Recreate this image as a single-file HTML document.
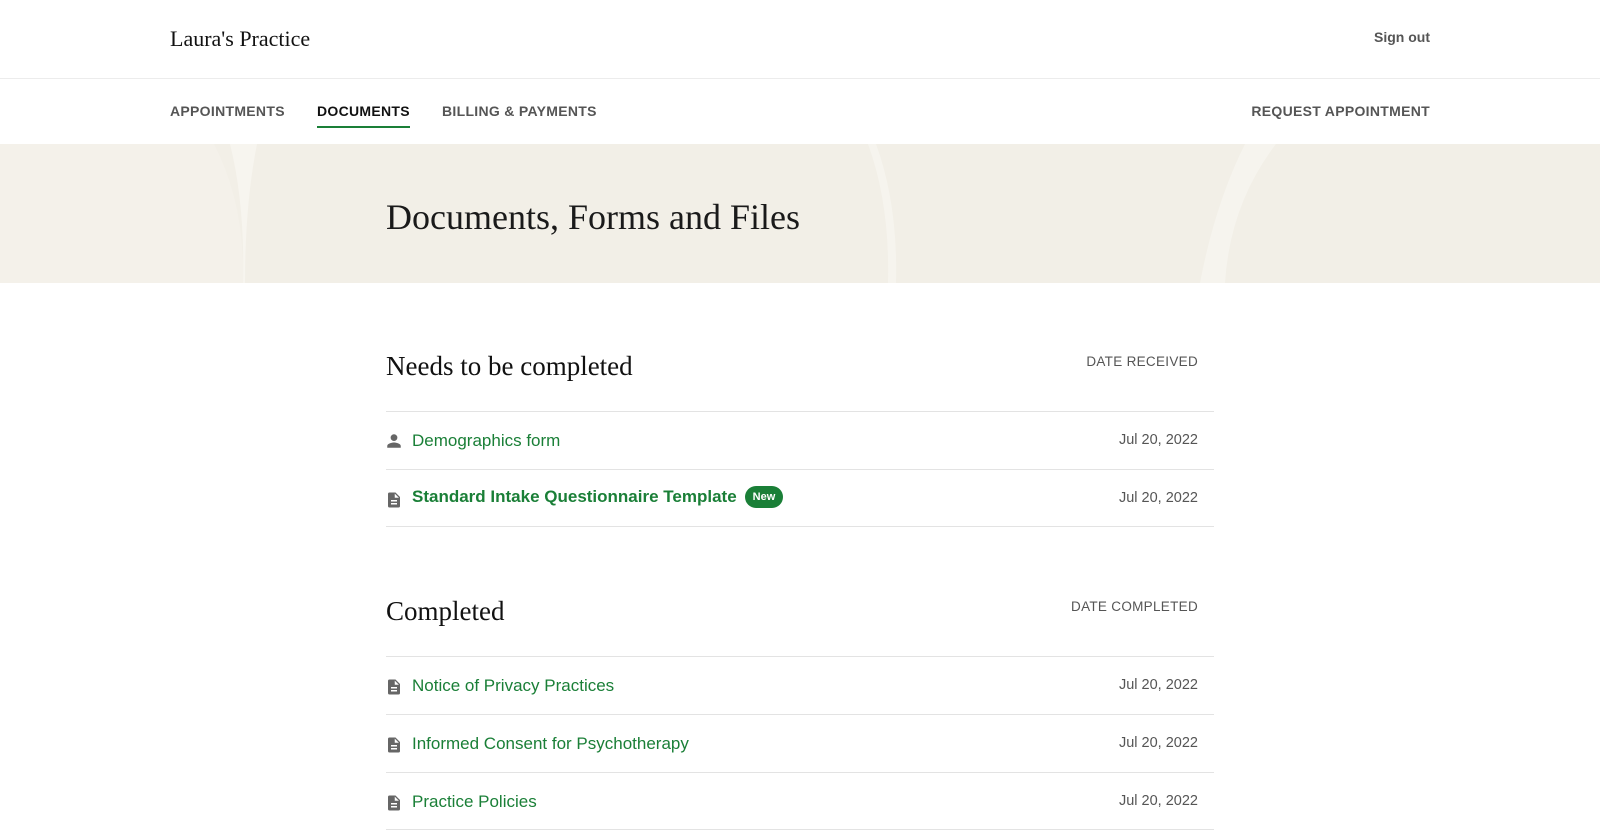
<!DOCTYPE html>
<html><head><meta charset="utf-8"><style>
*{margin:0;padding:0;box-sizing:border-box}
body{width:1600px;height:839px;overflow:hidden;background:#fff;font-family:"Liberation Sans",sans-serif;color:#222}
.top{height:79px;border-bottom:1px solid #ececec;position:relative}
.logo{position:absolute;left:170px;top:26px;font-family:"Liberation Serif",serif;font-size:22px;color:#111}
.signout{position:absolute;right:170px;top:29px;font-size:14px;font-weight:bold;color:#555}
.nav{height:65px;position:relative;font-size:14px;font-weight:bold;color:#555}
.nav span{position:absolute;top:24px;letter-spacing:.3px}
.nav .act{color:#111;border-bottom:2px solid #1a7f37;padding-bottom:7px}
.hero{height:139px;background:#f2efe7;position:relative;overflow:hidden}
.hero h1{position:absolute;left:386px;top:52px;font-family:"Liberation Serif",serif;font-weight:normal;font-size:36px;color:#1a1a1a}
.sec{position:absolute;left:386px;width:828px}
.sec h2{font-family:"Liberation Serif",serif;font-weight:normal;font-size:27px;color:#111;height:71px;padding-top:1px}
.sec .col{position:absolute;right:16px;top:4px;font-size:13.5px;color:#555;letter-spacing:.3px}
.row{height:58px;border-top:1px solid #e3e3e3;position:relative;font-size:17px;color:#1a7f37}
.row:last-child{border-bottom:1px solid #e3e3e3}
.row .t{position:absolute;left:26px;top:19px}
.row .d{position:absolute;right:16px;top:20px;font-size:14.5px;color:#555}
.row svg{position:absolute;left:-1px;top:20px}
.new{display:inline-block;background:#1a7f37;color:#fff;font-size:11px;font-weight:bold;border-radius:12px;padding:5px 8px;margin-left:8px;vertical-align:2px}
</style></head><body>
<div class="top"><div class="logo">Laura's Practice</div><div class="signout">Sign out</div></div>
<div class="nav"><span style="left:170px">APPOINTMENTS</span><span class="act" style="left:317px">DOCUMENTS</span><span style="left:442px">BILLING &amp; PAYMENTS</span><span style="right:170px">REQUEST APPOINTMENT</span></div>
<div class="hero">
<svg width="1600" height="139" style="position:absolute;left:0;top:0">
<path d="M214 0 Q245 60 243 139 L0 139 L0 0Z" fill="#f4f1ea"/>
<path d="M230 0 L257 0 Q245 60 245 139 L243 139 Q245 60 230 0Z" fill="#f7f5ef"/>
<path d="M876 0 Q898 60 896 139 L888 139 Q890 60 868 0Z" fill="#f6f4ee"/>
<path d="M1245 0 L1276 0 Q1230 60 1225 139 L1200 139 Q1215 60 1245 0Z" fill="#f6f4ee"/>
</svg>
<h1>Documents, Forms and Files</h1></div>
<div class="sec" style="top:350px"><h2>Needs to be completed</h2><div class="col">DATE RECEIVED</div>
<div class="row" style="margin-top:-10px"><svg width="18" height="18" viewBox="0 0 24 24"><path fill="#666" d="M12 12a4.5 4.5 0 1 0 0-9 4.5 4.5 0 0 0 0 9zm0 2c-3 0-9 1.5-9 4.5V21h18v-2.5c0-3-6-4.5-9-4.5z"/></svg><span class="t">Demographics form</span><span class="d">Jul 20, 2022</span></div>
<div class="row"><svg width="18" height="20" viewBox="0 0 24 24"><path fill="#666" d="M14 2H6a2 2 0 0 0-2 2v16a2 2 0 0 0 2 2h12a2 2 0 0 0 2-2V8zm2 16H8v-2h8zm0-4H8v-2h8zm-3-5V3.5L18.5 9z"/></svg><span class="t" style="font-weight:bold;top:16px">Standard Intake Questionnaire Template<span class="new">New</span></span><span class="d">Jul 20, 2022</span></div>
</div>
<div class="sec" style="top:595px"><h2>Completed</h2><div class="col">DATE COMPLETED</div>
<div class="row" style="margin-top:-10px"><svg width="18" height="20" viewBox="0 0 24 24"><path fill="#666" d="M14 2H6a2 2 0 0 0-2 2v16a2 2 0 0 0 2 2h12a2 2 0 0 0 2-2V8zm2 16H8v-2h8zm0-4H8v-2h8zm-3-5V3.5L18.5 9z"/></svg><span class="t">Notice of Privacy Practices</span><span class="d">Jul 20, 2022</span></div>
<div class="row"><svg width="18" height="20" viewBox="0 0 24 24"><path fill="#666" d="M14 2H6a2 2 0 0 0-2 2v16a2 2 0 0 0 2 2h12a2 2 0 0 0 2-2V8zm2 16H8v-2h8zm0-4H8v-2h8zm-3-5V3.5L18.5 9z"/></svg><span class="t">Informed Consent for Psychotherapy</span><span class="d">Jul 20, 2022</span></div>
<div class="row"><svg width="18" height="20" viewBox="0 0 24 24"><path fill="#666" d="M14 2H6a2 2 0 0 0-2 2v16a2 2 0 0 0 2 2h12a2 2 0 0 0 2-2V8zm2 16H8v-2h8zm0-4H8v-2h8zm-3-5V3.5L18.5 9z"/></svg><span class="t">Practice Policies</span><span class="d">Jul 20, 2022</span></div>
</div>
</body></html>
